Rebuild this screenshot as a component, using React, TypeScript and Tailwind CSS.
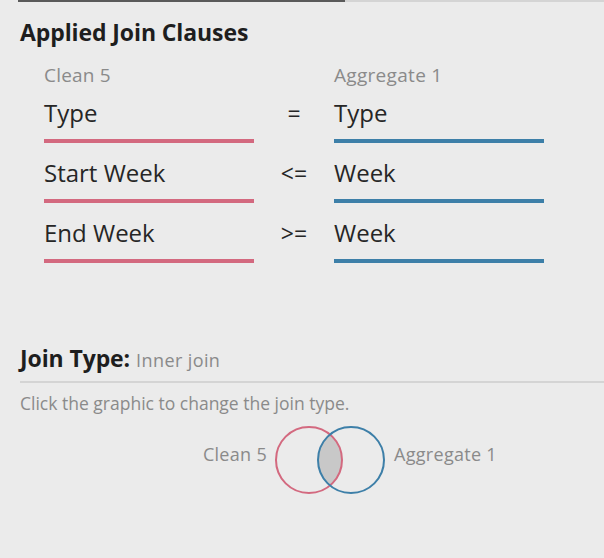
const clauses = [
  { left: 'Type', op: '=', right: 'Type' },
  { left: 'Start Week', op: '<=', right: 'Week' },
  { left: 'End Week', op: '>=', right: 'Week' },
]

function Venn() {
  return (
    <svg width="114" height="72" viewBox="0 0 114 72" className="block">
      <defs>
        <clipPath id="leftCircle">
          <circle cx="36" cy="36" r="33" />
        </clipPath>
      </defs>
      <circle cx="78" cy="36" r="33" fill="#c8c8c8" clipPath="url(#leftCircle)" />
      <circle cx="36" cy="36" r="33" fill="none" stroke="#d3697f" strokeWidth="2" />
      <circle cx="78" cy="36" r="33" fill="none" stroke="#3d7fa8" strokeWidth="2" />
    </svg>
  )
}

export default function App() {
  return (
    <div className="h-[558px] w-[604px] overflow-hidden bg-[#ebebeb] font-['Open_Sans',sans-serif]">
      <div className="flex">
        <div className="ml-[18px] h-[2px] w-[327px] bg-[#5a5a5a]" />
        <div className="h-[2px] flex-1 bg-[#d4d4d4]" />
      </div>

      <h2 className="ml-5 mt-[16px] text-[23px] font-bold leading-7 tracking-[-0.1px] text-[#1e1e1e]">
        Applied Join Clauses
      </h2>

      <div className="ml-11 mt-[19px] grid grid-cols-[210px_80px_210px]">
        <div className="-mb-[2px] text-[19px] leading-5 tracking-[0.2px] text-[#8a8a8a]">Clean 5</div>
        <div />
        <div className="-mb-[2px] text-[19px] leading-5 tracking-[0.3px] text-[#8a8a8a]">Aggregate 1</div>
        {clauses.map((c) => (
          <div key={c.left + c.op} className="contents">
            <div className="border-b-[4px] border-[#d3697f] pb-[11px] pt-[15px] text-[24px] leading-[30px] text-[#262626]">
              {c.left}
            </div>
            <div className="pt-[15px] text-center text-[23px] leading-[30px] text-[#262626]">{c.op}</div>
            <div className="border-b-[4px] border-[#3d7fa8] pb-[11px] pt-[15px] text-[24px] leading-[30px] text-[#262626]">
              {c.right}
            </div>
          </div>
        ))}
      </div>

      <div className="ml-5 mt-[81px] flex items-baseline gap-[6px]">
        <span className="text-[23px] font-bold leading-7 tracking-[-0.1px] text-[#1e1e1e]">Join Type:</span>
        <span className="text-[18px] tracking-[0.4px] text-[#8a8a8a]">Inner join</span>
      </div>
      <div className="ml-5 mt-[7px] h-[2px] bg-[#d4d4d4]" />
      <div className="ml-5 mt-[8px] text-[17.5px] leading-6 text-[#8a8a8a]">
        Click the graphic to change the join type.
      </div>

      <div className="mt-[9px] flex items-center">
        <div className="w-[273px] pb-[12px] pr-[6px] text-right text-[18px] tracking-[0.3px] text-[#8a8a8a]">
          Clean 5
        </div>
        <Venn />
        <div className="pb-[12px] pl-[7px] text-[18px] tracking-[0.3px] text-[#8a8a8a]">Aggregate 1</div>
      </div>
    </div>
  )
}
